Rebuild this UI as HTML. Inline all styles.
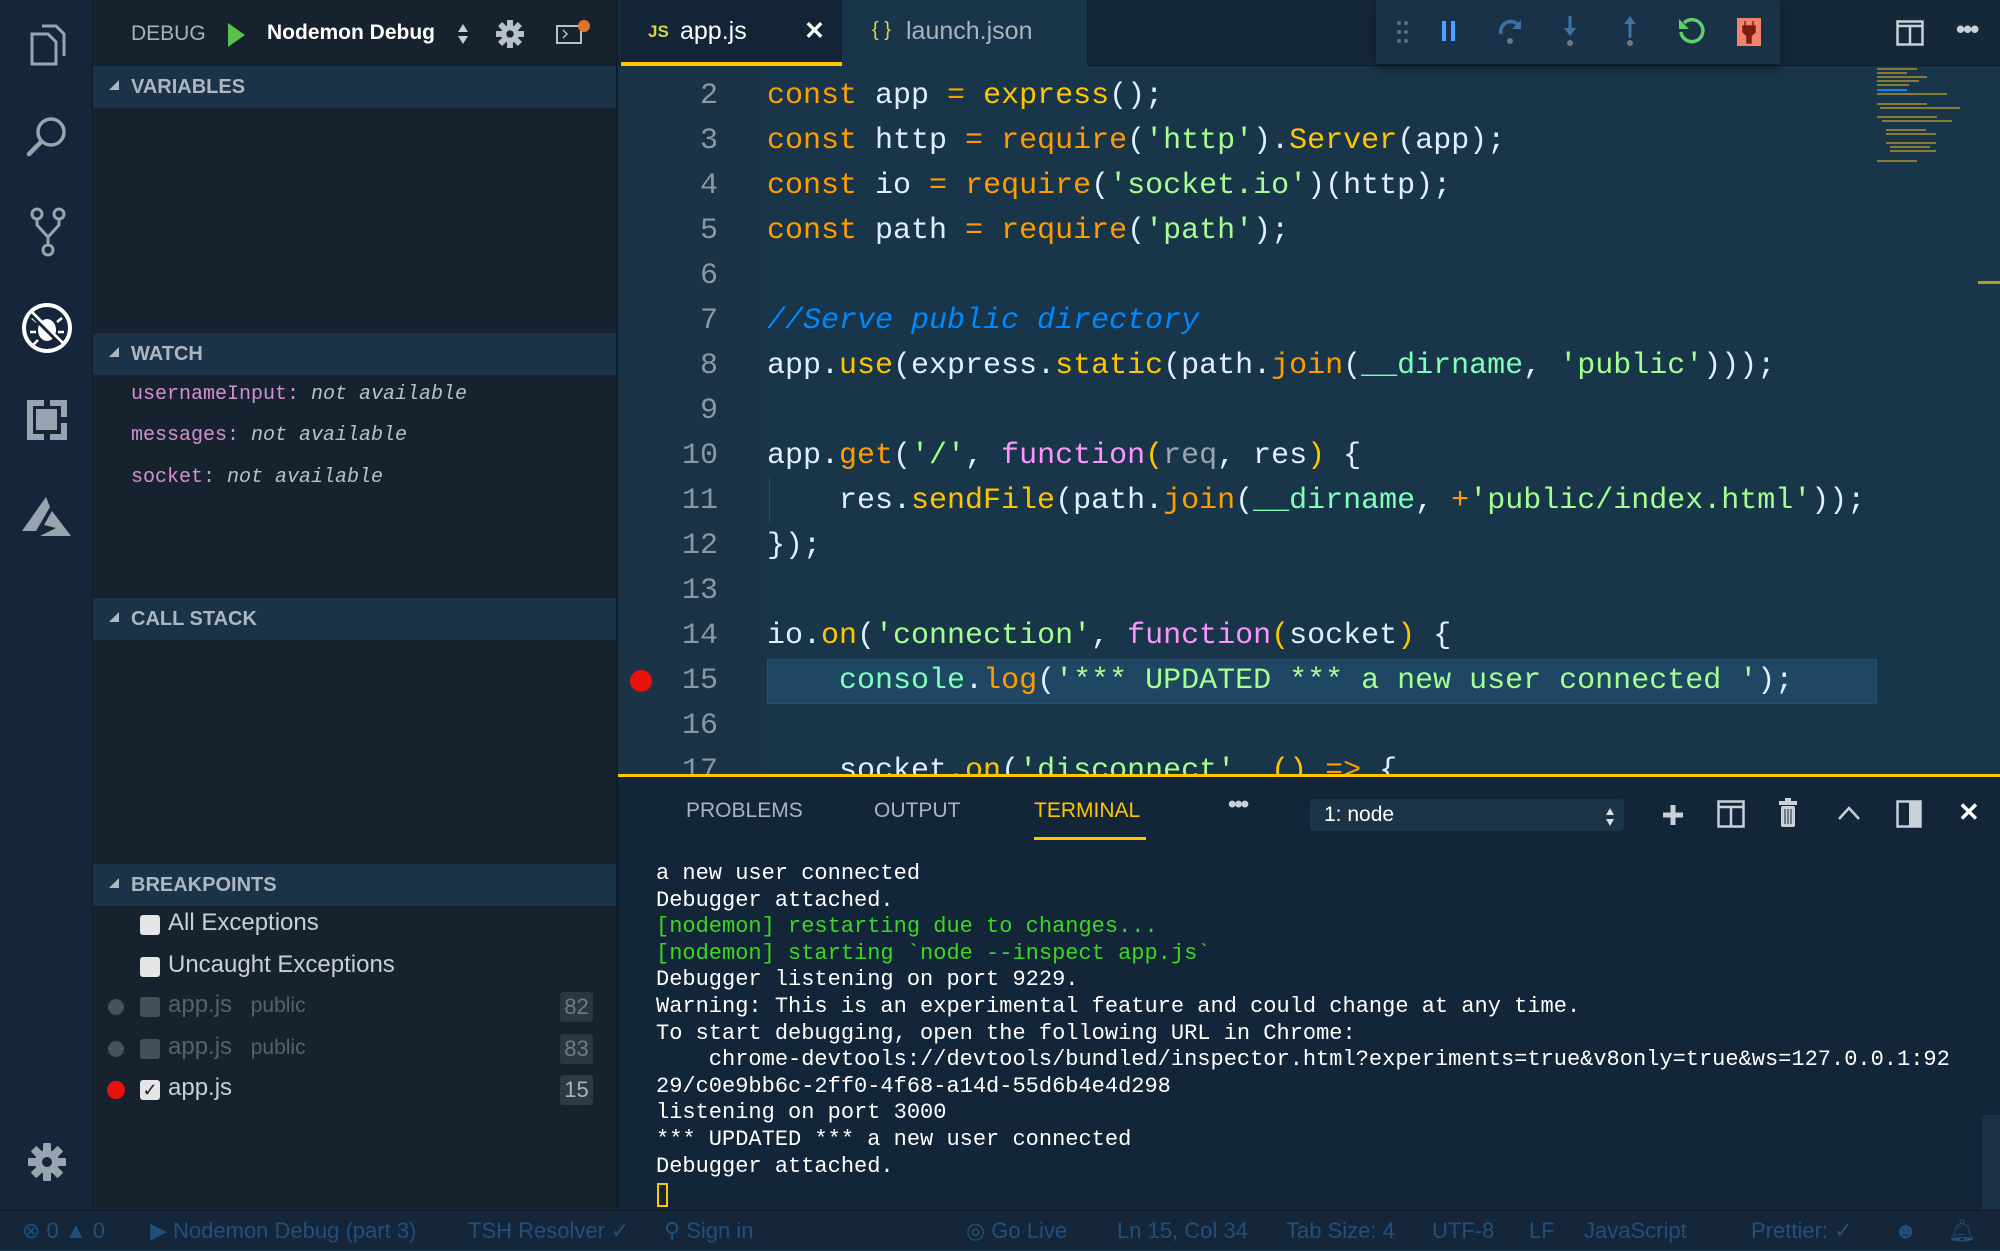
<!DOCTYPE html>
<html><head><meta charset="utf-8">
<style>
*{margin:0;padding:0;box-sizing:border-box}
body{width:2000px;height:1250px;overflow:hidden;background:#193549;font-family:"Liberation Sans",sans-serif;position:relative}
.abs{position:absolute}
#act{left:0;top:0;width:93px;height:1210px;background:#15263a;border-right:1px solid #0f1c28}
#side{left:93px;top:0;width:525px;height:1210px;background:#16232e;border-right:2px solid #0f1e2b}
.sh{position:absolute;left:0;width:523px;height:42px;background:#1a3348;color:#aeb7c0;font-weight:bold;font-size:20px;line-height:42px;padding-left:38px}
.sh:before{content:"";position:absolute;left:16px;top:14px;border-left:10px solid transparent;border-bottom:10px solid #aeb7c0}
.w{position:absolute;left:38px;font-family:"Liberation Mono",monospace;font-size:20px;color:#d58fd2}
.w i{color:#b9c0c6}
.bp{position:absolute;left:75px;font-size:24px;color:#c8cfd5}
.cb{position:absolute;left:-28px;top:6px;width:20px;height:20px;border-radius:3px;background:#e6e6e6}
.dim{color:#56616b}
.badge{position:absolute;left:467px;width:33px;height:30px;background:#2a3640;border-radius:3px;color:#6f7a84;font-size:22px;text-align:center;line-height:30px}
#ed{left:618px;top:0;width:1382px;height:774px;background:#193549;overflow:hidden}
#tabs{left:618px;top:0;width:1382px;height:66px;background:#15283a;border-bottom:1px solid #0e1b26}
.code{position:absolute;left:767px;font-family:"Liberation Mono",monospace;font-size:30px;line-height:45px;height:45px;white-space:pre;color:#e1efff}
.ln{position:absolute;left:640px;width:78px;text-align:right;font-family:"Liberation Mono",monospace;font-size:30px;line-height:45px;color:#8c98a3}
.k{color:#ff9d00}.f{color:#ffc600}.s{color:#a5ff90}.c{color:#0088ff;font-style:italic}.p{color:#fb94ff}.t{color:#80ffbb}.g{color:#9aa7b3}
#panel{left:618px;top:774px;width:1382px;height:436px;background:#132539;border-top:3px solid #ffc600}
.pt{position:absolute;top:22px;font-size:21px;color:#a8b4bf}
.term{position:absolute;left:656px;top:861px;font-family:"Liberation Mono",monospace;font-size:22px;line-height:26.6px;color:#fff;white-space:pre}
.gr{color:#3bd820}
#status{left:0;top:1210px;width:2000px;height:40px;background:#15263a;border-top:1px solid #0e1c2a;color:#22507a;font-size:22px;line-height:40px}
#status span{position:absolute;top:0}
.ico{position:absolute}
</style></head><body>

<div id="act" class="abs">
 <svg class="ico" style="left:28px;top:22px" width="40" height="46" viewBox="0 0 40 46"><path d="M14 4h14l8 8v22" fill="none" stroke="#98a4ae" stroke-width="3"/><path d="M4 12h16l8 8v22H4z" fill="none" stroke="#98a4ae" stroke-width="3"/></svg>
 <svg class="ico" style="left:24px;top:114px" width="46" height="46" viewBox="0 0 46 46"><circle cx="27" cy="18" r="13" fill="none" stroke="#98a4ae" stroke-width="3.5"/><path d="M17 28L5 40" stroke="#98a4ae" stroke-width="4.5" stroke-linecap="round"/></svg>
 <svg class="ico" style="left:28px;top:206px" width="40" height="52" viewBox="0 0 40 52"><circle cx="9" cy="8" r="5" fill="none" stroke="#98a4ae" stroke-width="3"/><circle cx="31" cy="8" r="5" fill="none" stroke="#98a4ae" stroke-width="3"/><circle cx="20" cy="44" r="5" fill="none" stroke="#98a4ae" stroke-width="3"/><path d="M9 13v6l11 12 11-12v-6M20 31v8" fill="none" stroke="#98a4ae" stroke-width="3"/></svg>
 <svg class="ico" style="left:21px;top:302px" width="52" height="52" viewBox="0 0 52 52"><circle cx="26" cy="26" r="23" fill="none" stroke="#fff" stroke-width="4"/><path d="M11 11l30 30" stroke="#fff" stroke-width="4"/><ellipse cx="26" cy="28" rx="9" ry="11" fill="#fff"/><path d="M16 20l-5-4M36 20l5-4M15 30h-6M37 30h6M17 38l-5 5M35 38l5 5" stroke="#fff" stroke-width="2.5"/><path d="M11 11l30 30" stroke="#15263a" stroke-width="3" transform="translate(-1.5 1.5)"/></svg>
 <svg class="ico" style="left:27px;top:400px" width="40" height="40" viewBox="0 0 40 40"><path d="M0 0h17v6H6v28h11v6H0zM23 0h17v17h-6V6H23zM23 40h17V23h-6v11H23z" fill="#98a4ae"/><rect x="9" y="9" width="21" height="21" fill="#98a4ae"/></svg>
 <svg class="ico" style="left:22px;top:497px" width="50" height="40" viewBox="0 0 50 40"><path d="M24 0L0 34h14L28 10zM30 14l-8 14 12 3-16 8h31z" fill="#98a4ae"/></svg>
 <svg class="ico" style="left:28px;top:1143px" width="38" height="38" viewBox="0 0 38 38"><g fill="#98a4ae"><circle cx="19" cy="19" r="12"/><rect x="15" y="0" width="8" height="38" rx="1"/><rect x="0" y="15" width="38" height="8" rx="1"/><rect x="15" y="0" width="8" height="38" rx="1" transform="rotate(45 19 19)"/><rect x="15" y="0" width="8" height="38" rx="1" transform="rotate(-45 19 19)"/></g><circle cx="19" cy="19" r="5" fill="#15263a"/></svg>
</div>

<div id="side" class="abs">
 <div class="abs" style="left:38px;top:22px;font-size:21px;color:#a8b1ba">DEBUG</div>
 <svg class="ico" style="left:133px;top:22px" width="20" height="26"><path d="M2 1l17 12L2 25z" fill="#58c24a"/></svg>
 <div class="abs" style="left:174px;top:21px;font-size:21px;color:#fff;font-weight:bold">Nodemon Debug</div>
 <svg class="ico" style="left:364px;top:22px" width="12" height="24"><path d="M6 2l5 8H1zM6 22l5-8H1z" fill="#ccc"/></svg>
 <svg class="ico" style="left:403px;top:20px" width="28" height="28" viewBox="0 0 38 38"><g fill="#b8c0c8"><circle cx="19" cy="19" r="12"/><rect x="15" y="0" width="8" height="38"/><rect x="0" y="15" width="38" height="8"/><rect x="15" y="0" width="8" height="38" transform="rotate(45 19 19)"/><rect x="15" y="0" width="8" height="38" transform="rotate(-45 19 19)"/></g><circle cx="19" cy="19" r="5" fill="#16232e"/></svg>
 <svg class="ico" style="left:462px;top:18px" width="36" height="28"><rect x="2" y="8" width="24" height="17" fill="none" stroke="#b8c0c8" stroke-width="2"/><path d="M8 12l4 4-4 4" fill="none" stroke="#b8c0c8" stroke-width="1.5"/><circle cx="29" cy="8" r="6" fill="#e0732d"/></svg>

 <div class="sh" style="top:66px">VARIABLES</div>
 <div class="sh" style="top:333px">WATCH</div>
 <div class="w" style="top:383px">usernameInput: <i>not available</i></div>
 <div class="w" style="top:424px">messages: <i>not available</i></div>
 <div class="w" style="top:466px">socket: <i>not available</i></div>
 <div class="sh" style="top:598px">CALL STACK</div>
 <div class="sh" style="top:864px">BREAKPOINTS</div>
 <div class="bp" style="top:909px"><div class="cb"></div>All Exceptions</div>
 <div class="bp" style="top:951px"><div class="cb"></div>Uncaught Exceptions</div>
 <div class="abs" style="left:15px;top:999px;width:16px;height:16px;border-radius:50%;background:#46515a"></div>
 <div class="bp dim" style="top:991px"><div class="cb" style="background:#454f58"></div>app.js <span style="font-size:21px;margin-left:12px">public</span></div>
 <div class="badge" style="top:992px">82</div>
 <div class="abs" style="left:15px;top:1041px;width:16px;height:16px;border-radius:50%;background:#46515a"></div>
 <div class="bp dim" style="top:1033px"><div class="cb" style="background:#454f58"></div>app.js <span style="font-size:21px;margin-left:12px">public</span></div>
 <div class="badge" style="top:1034px">83</div>
 <div class="abs" style="left:14px;top:1081px;width:18px;height:18px;border-radius:50%;background:#e8120c"></div>
 <div class="bp" style="top:1074px"><div class="cb" style="color:#222;font-size:18px;line-height:20px;text-align:center">✓</div>app.js</div>
 <div class="badge" style="top:1075px;color:#a9b2ba;background:#2d3a44">15</div>
</div>

<div id="ed" class="abs"></div>
<div class="abs" style="left:618px;top:66px;width:149px;height:708px;background:#1a3347"></div>
<div class="abs" style="left:767px;top:659px;width:1110px;height:45px;background:#1f4662;border:1px solid #234e6c"></div>
<div class="abs" style="left:630px;top:670px;width:22px;height:22px;border-radius:50%;background:#e8120c"></div>
<div class="abs" style="left:769px;top:478px;width:1px;height:45px;background:#2f4a5e"></div>

<div class="ln" style="top:74px">2</div><div class="code" style="top:74px"><span class="k">const</span> app <span class="k">=</span> <span class="f">express</span>();</div>
<div class="ln" style="top:119px">3</div><div class="code" style="top:119px"><span class="k">const</span> http <span class="k">=</span> <span class="k">require</span>(<span class="s">'http'</span>).<span class="f">Server</span>(app);</div>
<div class="ln" style="top:164px">4</div><div class="code" style="top:164px"><span class="k">const</span> io <span class="k">=</span> <span class="k">require</span>(<span class="s">'socket.io'</span>)(http);</div>
<div class="ln" style="top:209px">5</div><div class="code" style="top:209px"><span class="k">const</span> path <span class="k">=</span> <span class="k">require</span>(<span class="s">'path'</span>);</div>
<div class="ln" style="top:254px">6</div>
<div class="ln" style="top:299px">7</div><div class="code" style="top:299px"><span class="c">//Serve public directory</span></div>
<div class="ln" style="top:344px">8</div><div class="code" style="top:344px">app.<span class="f">use</span>(express.<span class="f">static</span>(path.<span class="k">join</span>(<span class="t">__dirname</span>, <span class="s">'public'</span>)));</div>
<div class="ln" style="top:389px">9</div>
<div class="ln" style="top:434px">10</div><div class="code" style="top:434px">app.<span class="k">get</span>(<span class="s">'/'</span>, <span class="p">function</span><span class="f">(</span><span class="g">req</span>, res<span class="f">)</span> {</div>
<div class="ln" style="top:479px">11</div><div class="code" style="top:479px">    res.<span class="f">sendFile</span>(path.<span class="k">join</span>(<span class="t">__dirname</span>, <span class="k">+</span><span class="s">'public/index.html'</span>));</div>
<div class="ln" style="top:524px">12</div><div class="code" style="top:524px">});</div>
<div class="ln" style="top:569px">13</div>
<div class="ln" style="top:614px">14</div><div class="code" style="top:614px">io.<span class="f">on</span>(<span class="s">'connection'</span>, <span class="p">function</span><span class="f">(</span>socket<span class="f">)</span> {</div>
<div class="ln" style="top:659px">15</div><div class="code" style="top:659px">    <span class="t">console</span>.<span class="k">log</span>(<span class="s">'*** UPDATED *** a new user connected '</span>);</div>
<div class="ln" style="top:704px">16</div>
<div class="ln" style="top:749px">17</div><div class="code" style="top:749px">    socket.<span class="f">on</span>(<span class="s">'disconnect'</span>, <span class="f">()</span> <span class="k">=&gt;</span> {</div>

<!-- minimap -->
<svg class="abs" style="left:1876px;top:66px" width="124" height="100"><g fill="#b59a2c" opacity=".7"><rect x="1" y="2" width="40" height="2"/><rect x="1" y="6" width="30" height="2"/><rect x="1" y="10" width="50" height="2"/><rect x="1" y="14" width="42" height="2"/><rect x="1" y="18" width="32" height="2"/><rect x="1" y="27" width="70" height="2"/><rect x="1" y="37" width="50" height="2"/><rect x="4" y="41" width="80" height="2"/><rect x="1" y="50" width="60" height="2"/><rect x="6" y="54" width="70" height="2"/><rect x="10" y="63" width="40" height="2"/><rect x="10" y="67" width="50" height="2"/><rect x="10" y="76" width="50" height="2"/><rect x="14" y="80" width="40" height="2"/><rect x="14" y="84" width="46" height="2"/><rect x="1" y="94" width="40" height="2"/></g><rect x="1" y="23" width="30" height="2" fill="#0088ff"/></svg>
<div class="abs" style="left:1978px;top:281px;width:22px;height:3px;background:#b59a2c"></div>

<div id="tabs" class="abs"></div>
<div class="abs" style="left:621px;top:0;width:221px;height:66px;background:#122436;border-bottom:4px solid #ffc600"></div>
<div class="abs" style="left:648px;top:22px;font-size:17px;color:#d9d34c;font-weight:bold">JS</div>
<div class="abs" style="left:680px;top:17px;font-size:25px;color:#fff">app.js</div>
<div class="abs" style="left:804px;top:16px;font-size:25px;color:#fff;font-weight:bold">✕</div>
<div class="abs" style="left:842px;top:0;width:246px;height:66px;background:#193549;border-right:1px solid #122436"></div>
<div class="abs" style="left:872px;top:19px;font-size:20px;color:#d9d34c">{ }</div>
<div class="abs" style="left:906px;top:17px;font-size:25px;color:#a9b4be">launch.json</div>

<!-- debug toolbar -->
<div class="abs" style="left:1376px;top:0;width:404px;height:64px;background:#1a3247;box-shadow:0 4px 10px rgba(0,0,0,.4)"></div>
<svg class="abs" style="left:1396px;top:20px" width="14" height="24"><g fill="#5d6e7c"><circle cx="3" cy="3" r="2"/><circle cx="10" cy="3" r="2"/><circle cx="3" cy="12" r="2"/><circle cx="10" cy="12" r="2"/><circle cx="3" cy="21" r="2"/><circle cx="10" cy="21" r="2"/></g></svg>
<svg class="abs" style="left:1440px;top:19px" width="18" height="26"><rect x="2" y="2" width="4" height="20" fill="#4da0ff"/><rect x="11" y="2" width="4" height="20" fill="#4da0ff"/></svg>
<svg class="abs" style="left:1496px;top:16px" width="30" height="30"><path d="M5 18a10 10 0 0 1 18-8" fill="none" stroke="#3b73a6" stroke-width="3.5"/><path d="M25 4v9h-9z" fill="#3b73a6"/><circle cx="14" cy="25" r="3" fill="#6b7886"/></svg>
<svg class="abs" style="left:1560px;top:14px" width="20" height="34"><path d="M10 2v18" stroke="#3b73a6" stroke-width="3"/><path d="M4 14l6 8 6-8z" fill="#3b73a6"/><circle cx="10" cy="29" r="3" fill="#6b7886"/></svg>
<svg class="abs" style="left:1620px;top:14px" width="20" height="34"><path d="M10 8v16" stroke="#3b73a6" stroke-width="3"/><path d="M4 10l6-8 6 8z" fill="#3b73a6"/><circle cx="10" cy="29" r="3" fill="#6b7886"/></svg>
<svg class="abs" style="left:1676px;top:16px" width="30" height="30"><path d="M8 7a11 11 0 1 1-3 9" fill="none" stroke="#5fcf6a" stroke-width="3.5"/><path d="M3 3v10h10z" fill="#5fcf6a"/></svg>
<svg class="abs" style="left:1737px;top:18px" width="24" height="28"><rect width="24" height="28" fill="#f2826c"/><path d="M8 3v5M16 3v5M6 8h12v6l-4 4v7h-4v-7l-4-4z" fill="#7a1e14" stroke="#7a1e14" stroke-width="1.5"/></svg>
<svg class="abs" style="left:1896px;top:20px" width="28" height="26"><rect x="1.5" y="1.5" width="25" height="23" fill="none" stroke="#c8d0d8" stroke-width="2.5"/><path d="M1.5 6h25M14 6v19" stroke="#c8d0d8" stroke-width="2.5"/></svg>
<div class="abs" style="left:1956px;top:14px;font-size:26px;color:#c8d0d8;font-weight:bold;letter-spacing:-2px">•••</div>

<!-- panel -->
<div id="panel" class="abs">
 <div class="pt" style="left:68px">PROBLEMS</div>
 <div class="pt" style="left:256px">OUTPUT</div>
 <div class="pt" style="left:416px;color:#ffc600">TERMINAL</div>
 <div class="abs" style="left:416px;top:60px;width:112px;height:3px;background:#ffc600"></div>
 <div class="abs" style="left:610px;top:14px;font-size:24px;color:#c8d0d8;font-weight:bold;letter-spacing:-2px">•••</div>
 <div class="abs" style="left:692px;top:22px;width:314px;height:32px;background:#1b3448;border-radius:4px;color:#fff;font-size:21px;line-height:32px;padding-left:14px">1: node</div>
 <svg class="abs" style="left:986px;top:30px" width="12" height="20"><path d="M6 1l4 7H2zM6 19l4-7H2z" fill="#ddd"/></svg>
 <svg class="abs" style="left:1043px;top:26px" width="24" height="24"><path d="M12 2v20M2 12h20" stroke="#c8d0d8" stroke-width="5"/></svg>
 <svg class="abs" style="left:1099px;top:23px" width="28" height="28"><rect x="1.5" y="1.5" width="25" height="25" fill="none" stroke="#c8d0d8" stroke-width="2.5"/><path d="M1.5 7h25M14 7v19" stroke="#c8d0d8" stroke-width="2.5"/></svg>
 <svg class="abs" style="left:1160px;top:20px" width="20" height="32"><rect x="7" y="1" width="6" height="3" fill="#c8d0d8"/><rect x="1" y="4" width="18" height="4" fill="#c8d0d8"/><rect x="3" y="9" width="14" height="21" rx="2" fill="#c8d0d8"/><path d="M7 12v15M10 12v15M13 12v15" stroke="#132539" stroke-width="1"/></svg>
 <svg class="abs" style="left:1219px;top:28px" width="24" height="16"><path d="M2 14l10-11 10 11" fill="none" stroke="#c8d0d8" stroke-width="2.5"/></svg>
 <svg class="abs" style="left:1278px;top:23px" width="26" height="28"><rect x="1.5" y="1.5" width="23" height="25" fill="none" stroke="#c8d0d8" stroke-width="2.5"/><rect x="13" y="1.5" width="11" height="25" fill="#c8d0d8"/></svg>
 <div class="abs" style="left:1340px;top:20px;font-size:26px;color:#fff;font-weight:bold">✕</div>
 <div class="abs" style="left:1364px;top:338px;width:18px;height:96px;background:#1a3044"></div>
</div>
<div class="term">a new user connected
Debugger attached.
<span class="gr">[nodemon] restarting due to changes...</span>
<span class="gr">[nodemon] starting `node --inspect app.js`</span>
Debugger listening on port 9229.
Warning: This is an experimental feature and could change at any time.
To start debugging, open the following URL in Chrome:
    chrome-devtools://devtools/bundled/inspector.html?experiments=true&amp;v8only=true&amp;ws=127.0.0.1:92
29/c0e9bb6c-2ff0-4f68-a14d-55d6b4e4d298
listening on port 3000
*** UPDATED *** a new user connected
Debugger attached.
</div>
<div class="abs" style="left:657px;top:1183px;width:11px;height:24px;border:2px solid #ffc600"></div>

<div id="status" class="abs">
 <span style="left:22px">⊗ 0 ▲ 0</span>
 <span style="left:150px">▶ Nodemon Debug (part 3)</span>
 <span style="left:468px">TSH Resolver ✓</span>
 <span style="left:664px">⚲ Sign in</span>
 <span style="left:966px">◎ Go Live</span>
 <span style="left:1117px">Ln 15, Col 34</span>
 <span style="left:1286px">Tab Size: 4</span>
 <span style="left:1432px">UTF-8</span>
 <span style="left:1529px">LF</span>
 <span style="left:1584px">JavaScript</span>
 <span style="left:1751px">Prettier: ✓</span>
 <span style="left:1894px">☻</span>
 <span style="left:1948px">🔔︎</span>
</div>
</body></html>
